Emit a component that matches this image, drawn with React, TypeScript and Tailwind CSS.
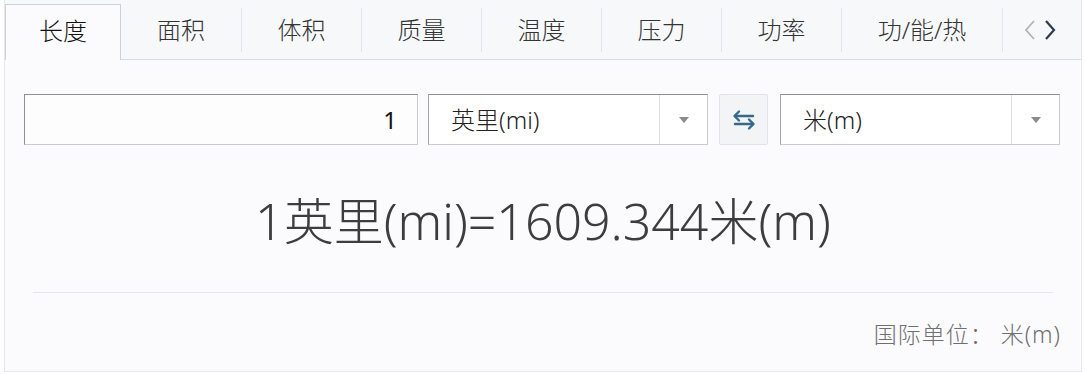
import React, { useState } from 'react';

const TABS = ['长度', '面积', '体积', '质量', '温度', '压力', '功率', '功/能/热'];

const Caret = () => (
  <svg width="12" height="8" viewBox="0 0 12 8"><path d="M1 1h10L6 7z" fill="#8a8a8a" /></svg>
);

const SwapIcon = () => (
  <svg width="26" height="24" viewBox="0 0 26 24" fill="none" stroke="#36688c" strokeWidth="2.4" strokeLinecap="round" strokeLinejoin="round">
    <path d="M22 8H4" />
    <path d="M8 3.5 3.5 8 8 12.5" />
    <path d="M4 16h18" />
    <path d="M18 11.5 22.5 16 18 20.5" />
  </svg>
);

const UnitSelect = ({ label }: { label: string }) => (
  <div className="flex h-[51px] w-[280px] border border-[#c9cacd] border-t-[#8f9094] border-l-[#a4a5a8] bg-white">
    <div className="flex flex-1 items-center pl-[22px] text-[24px] font-light text-[#222]">{label}</div>
    <div className="flex w-[48px] items-center justify-center border-l border-[#dcdde0]">
      <Caret />
    </div>
  </div>
);

const App: React.FC = () => {
  const [active] = useState(0);

  return (
    <div
      className="h-[374px] w-[1086px] bg-white"
      style={{ fontFamily: '"Noto Sans", "Noto Sans CJK SC", sans-serif' }}
    >
      <div className="mx-[4px] h-[372px] border-x border-b border-[#e6e7ea] bg-[#fbfbfd]">
        <div className="flex h-[60px] border-b border-[#d9dadd] bg-[#f7f8fa]">
          {TABS.map((t, i) => (
            <div
              key={t}
              className={`flex items-center text-[24px] font-light ${i === 7 ? 'w-[161px]' : i === 0 ? 'w-[116px]' : 'w-[120px]'} ${
                i === active
                  ? 'mt-[4px] -mb-px border-x border-t border-[#cfd0d3] bg-[#fbfbfd] text-[#111]'
                  : 'text-[#333]'
              }`}
            >
              {i > active + 1 && <div className="h-[44px] w-px bg-[#e4e5e8]" />}
              <span className={`flex-1 text-center ${i === active ? 'mt-[-4px]' : ''}`}>{t}</span>
            </div>
          ))}
          <div className="flex flex-1 items-center">
            <div className="h-[44px] w-px bg-[#e4e5e8]" />
            <div className="flex flex-1 items-center justify-center gap-[6px] pr-[4px]">
              <svg width="14" height="22" viewBox="0 0 14 22" fill="none" stroke="#b3b3b6" strokeWidth="1.8"><path d="M11 2 3 11l8 9" /></svg>
              <svg width="14" height="22" viewBox="0 0 14 22" fill="none" stroke="#2f3a4c" strokeWidth="2.2"><path d="M3 2l8 9-8 9" /></svg>
            </div>
          </div>
        </div>

        <div className="flex items-center pl-[19px] pt-[34px]">
          <div className="flex h-[51px] w-[394px] items-center justify-end border border-[#c9cacd] border-t-[#8f9094] border-l-[#8f9094] bg-[#fdfdfe] pr-[20px] text-[24px] text-[#111]">
            1
          </div>
          <div className="ml-[10px]">
            <UnitSelect label="英里(mi)" />
          </div>
          <div className="ml-[11px] flex h-[51px] w-[49px] items-center justify-center rounded-[2px] border border-[#e2e3e6] bg-[#f3f4f6]">
            <SwapIcon />
          </div>
          <div className="ml-[12px]">
            <UnitSelect label="米(m)" />
          </div>
        </div>

        <div className="mt-[46px] flex justify-center text-[50px] font-light leading-[60px] text-[#3d3d3d]">
          1英里(mi)=1609.344米(m)
        </div>

        <div className="mx-[28px] mt-[41px] border-t border-[#e6e7ea]" />

        <div className="mt-[24px] flex justify-end pr-[20px] text-[23px] font-light tracking-[1px] text-[#6f6f72]">
          国际单位：&nbsp;米(m)
        </div>
      </div>
    </div>
  );
};

export default App;
